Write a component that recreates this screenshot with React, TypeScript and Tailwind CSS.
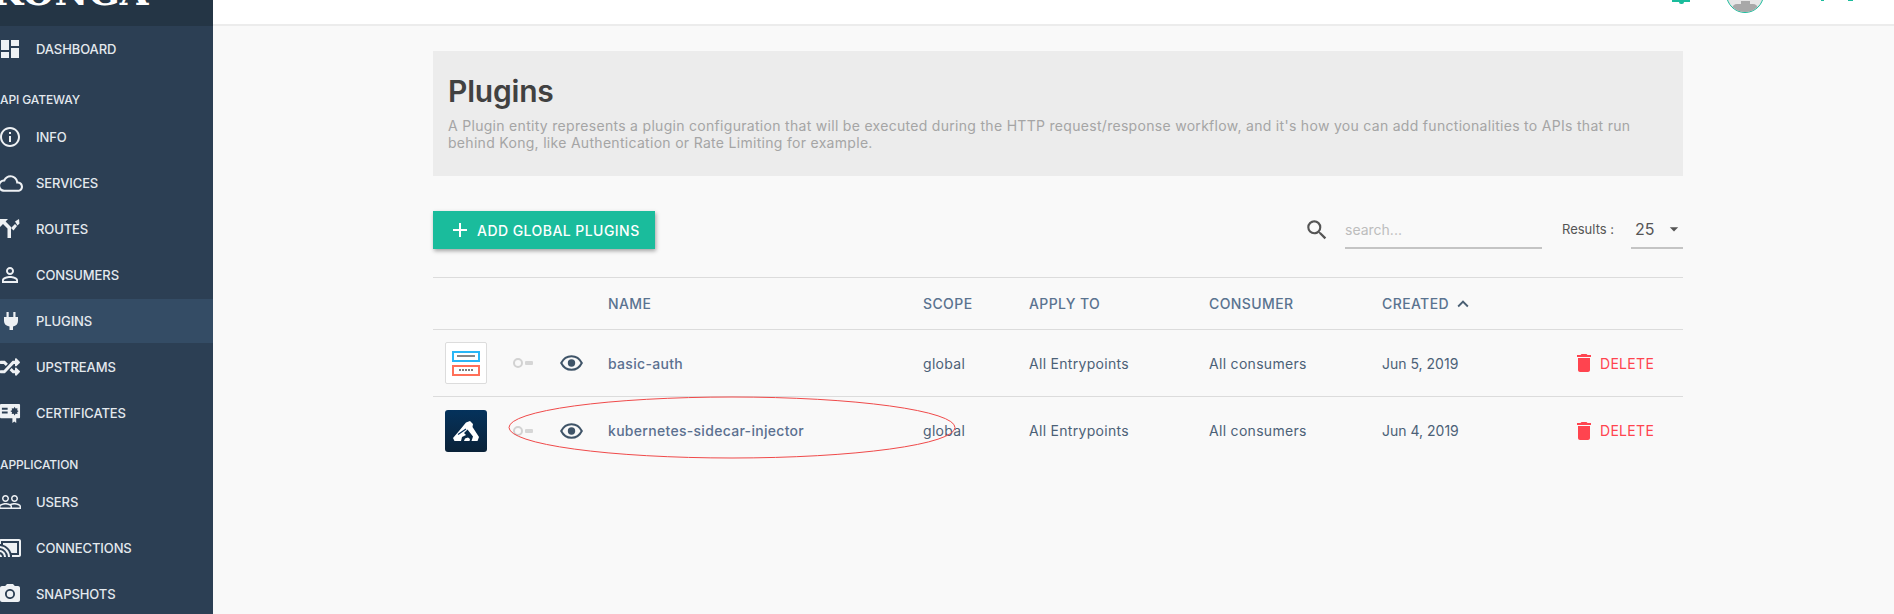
import React from 'react';
import {
  MdDashboard, MdInfoOutline, MdCloudQueue, MdPersonOutline,
  MdPeopleOutline, MdCameraAlt, MdDelete, MdAdd,
  MdKeyboardArrowUp, MdArrowDropDown, MdCastConnected, MdSearch,
} from 'react-icons/md';
import { FaRandom } from 'react-icons/fa';

const RoutesIcon = () => (
  <svg width="20" height="20" viewBox="0 0 20 20" fill="currentColor" className="ml-[2px]">
    <path d="M0 0h8L5.600 2.400 11 8v11H7.500V9.500L3 5 0 8z" />
    <path d="M11 9l4-4 2 2-3.500 4.500z" />
    <path d="M15 2.500L19 0l.5 4.500-2 2z" />
  </svg>
);

const PlugIcon = () => (
  <svg width="14" height="18" viewBox="0 0 14 18" fill="currentColor" className="ml-[6px]">
    <path d="M2.500 0h2.200v5h4.600V0h2.200v5H14v4c0 3-2 5-5 5.500V18H5.500v-3.500C2 14 0 12 0 9V5h2.500z" />
  </svg>
);

const CertIcon = () => (
  <svg width="21" height="21" viewBox="0 0 22 22" fill="currentColor" className="ml-[2px]">
    <path fillRule="evenodd" d="M1 1h19a1 1 0 0 1 1 1v13a1 1 0 0 1-1 1h-3v5l-2-1.500-2 1.500v-5H1a1 1 0 0 1-1-1V2a1 1 0 0 1 1-1zm1 4v2h6V5zm0 4v2h6V9zm13.300-5l-1 1.800-2-.3.300 2-1.800 1 1.800 1.100-.3 2 2-.3 1 1.700 1-1.700 2 .3-.3-2 1.500-1.100-1.500-1 .3-2-2 .3z" />
  </svg>
);

const EyeIcon = () => (
  <svg width="23" height="16" viewBox="0 0 23 16" fill="none" className="text-[#3f5468]">
    <path d="M1.200 8C3.300 3.800 7 1.200 11.500 1.200S19.700 3.800 21.800 8c-2.100 4.200-5.800 6.800-10.300 6.800S3.300 12.200 1.200 8z" stroke="currentColor" strokeWidth="2" />
    <circle cx="11.500" cy="8" r="3.700" fill="currentColor" />
  </svg>
);

const navTop = [{ label: 'DASHBOARD', icon: <MdDashboard size={24} /> }];
const navGateway = [
  { label: 'INFO', icon: <MdInfoOutline size={24} /> },
  { label: 'SERVICES', icon: <MdCloudQueue size={25} /> },
  { label: 'ROUTES', icon: <RoutesIcon /> },
  { label: 'CONSUMERS', icon: <MdPersonOutline size={24} /> },
  { label: 'PLUGINS', icon: <PlugIcon />, active: true },
  { label: 'UPSTREAMS', icon: <FaRandom size={20} className="ml-[2px]" /> },
  { label: 'CERTIFICATES', icon: <CertIcon /> },
];
const navApp = [
  { label: 'USERS', icon: <MdPeopleOutline size={24} /> },
  { label: 'CONNECTIONS', icon: <MdCastConnected size={24} /> },
  { label: 'SNAPSHOTS', icon: <MdCameraAlt size={24} /> },
];

function NavItem({ label, icon, active }: { label: string; icon: React.ReactNode; active?: boolean }) {
  return (
    <div className={`flex shrink-0 items-center ${active ? 'my-[1px] h-[44px] bg-[#344c65]' : 'h-[46px]'}`}>
      <div className="-ml-[2px] mr-[2px] flex w-[36px] shrink-0 items-center justify-start text-[#eef1f4]">{icon}</div>
      <span className="pt-[1px] text-[13px] font-medium tracking-[-0.1px] text-[#e4e9ee]">{label}</span>
    </div>
  );
}

function SectionLabel({ children, h }: { children: React.ReactNode; h: string }) {
  return <div className={`flex shrink-0 items-end pb-[5px] text-[12px] font-medium tracking-[-0.1px] text-[#e4e9ee] ${h}`}>{children}</div>;
}

function Toggle() {
  return (
    <div className="flex items-center gap-[2px]">
      <div className="h-[10px] w-[10px] rounded-full border-2 border-[#d2d2d2]" />
      <div className="h-[4px] w-[8px] rounded-[1px] bg-[#d6d6d6]" />
    </div>
  );
}

function BasicAuthLogo() {
  return (
    <div className="flex h-[42px] w-[42px] flex-col items-center justify-center gap-[3px] rounded-[2px] border border-[#dcdcdc] bg-white">
      <div className="flex h-[11px] w-[28px] items-center justify-center border-2 border-[#29b6f6]">
        <div className="h-[2px] w-[18px] bg-[#888]" />
      </div>
      <div className="flex h-[11px] w-[28px] items-center justify-center gap-[1px] border-2 border-[#ff7059]">
        {[0, 1, 2, 3, 4].map((i) => <div key={i} className="h-[2px] w-[2px] rounded-full bg-[#555]" />)}
      </div>
    </div>
  );
}

function KongLogo() {
  return (
    <div className="flex h-[42px] w-[42px] items-center justify-center rounded-[3px] bg-gradient-to-b from-[#04325c] to-[#0a2238]">
      <svg width="26" height="20" viewBox="0 0 26 20" fill="#fff">
        <path d="M13 1.500L17 0l3 3-.5 3L26 16l-1.500 4h-6l1.500-4.500-5.500-7L11 12l2 2-4 2-1 4H1.500L0 17l6-7z" />
        <path d="M11 20l1-2.500 3-1 2 1.500-.5 2z" />
        <path d="M5 13.500l8-5.500" stroke="#06305a" strokeWidth="1.200" fill="none" />
      </svg>
    </div>
  );
}

const cols = 'grid grid-cols-[175px_315px_106px_180px_173px_194px_1fr]';

const rows = [
  { name: 'basic-auth', date: 'Jun 5, 2019', logo: <BasicAuthLogo /> },
  { name: 'kubernetes-sidecar-injector', date: 'Jun 4, 2019', logo: <KongLogo /> },
];

export default function App() {
  return (
    <div className="flex h-[614px] w-[1894px] overflow-hidden bg-[#f9f9f9] font-[Inter,sans-serif]">
      <aside className="flex w-[213px] shrink-0 flex-col bg-[#2c3f54]">
        <div className="relative flex h-[26px] shrink-0 items-end overflow-hidden bg-[#243545]">
          <span className="-ml-[9px] mb-[24px] font-['DejaVu_Serif',serif] text-[37px] leading-[20px] font-black whitespace-nowrap text-white">KONGA</span>
        </div>
        {navTop.map((n) => <NavItem key={n.label} {...n} />)}
        <SectionLabel h="h-[42px]">API GATEWAY</SectionLabel>
        {navGateway.map((n) => <NavItem key={n.label} {...n} />)}
        <SectionLabel h="h-[43px]">APPLICATION</SectionLabel>
        {navApp.map((n) => <NavItem key={n.label} {...n} />)}
      </aside>

      <main className="flex min-w-0 flex-1 flex-col">
        <header className="flex h-[26px] shrink-0 items-start overflow-hidden border-b-2 border-[#ececec] bg-white">
          <div className="ml-[1459px] flex w-[18px] shrink-0 flex-col items-center">
            <div className="h-[2px] w-[18px] bg-[#1abc9c]" />
            <div className="h-[2px] w-[5px] rounded-b-[3px] bg-[#1abc9c]" />
          </div>
          <div className="ml-[36px] -mt-[25px] flex h-[38px] w-[38px] shrink-0 flex-col items-center justify-end overflow-hidden rounded-full border border-[#1abc9c] bg-[#e6e6e6]">
            <div className="h-[3px] w-[9px] bg-[#a8a8a8]" />
            <div className="h-[8px] w-[26px] rounded-t-[5px] bg-[#a8a8a8]" />
          </div>
          <div className="ml-[57px] h-[1px] w-[3px] shrink-0 bg-[#1abc9c]" />
          <div className="ml-[24px] h-[1px] w-[5px] shrink-0 bg-[#1abc9c]" />
        </header>

        <div className="mx-[220px] w-[1250px] pt-[25px]">
          <section className="flex h-[125px] flex-col bg-[#ececec] px-[15px] pt-[22px]">
            <h1 className="text-[30px] leading-[36px] font-semibold tracking-[-0.2px] text-[#414141]">Plugins</h1>
            <p className="mt-[8px] pr-[30px] text-[14px] leading-[17px] tracking-[0.3px] text-[#a5a5a5]">
              A Plugin entity represents a plugin configuration that will be executed during the HTTP request/response workflow, and it's how you can add functionalities to APIs that run behind Kong, like Authentication or Rate Limiting for example.
            </p>
          </section>

          <div className="mt-[35px] flex h-[38px] items-center">
            <button className="flex h-[38px] w-[222px] items-center bg-[#1abc9c] pl-[18px] text-[14px] font-medium tracking-[0.45px] text-white shadow-[1px_2px_4px_rgba(0,0,0,0.35)]">
              <MdAdd size={24} className="-ml-[3px] mr-[5px]" />
              ADD GLOBAL PLUGINS
            </button>
            <div className="ml-auto flex items-center">
              <MdSearch size={26} className="text-[#555]" />
              <div className="ml-[15px] flex h-[37px] w-[197px] items-center border-b-2 border-[#c4c4c4] text-[14px] text-[#bdbdbd]">search...</div>
              <span className="ml-[20px] w-[69px] text-[13px] text-[#555]">Results :</span>
              <div className="flex h-[38px] w-[52px] items-center justify-between border-b-2 border-[#c4c4c4] pl-[4px] text-[16px] text-[#555]">
                25
                <MdArrowDropDown size={20} className="-mr-[1px] text-[#555]" />
              </div>
            </div>
          </div>

          <div className="relative mt-[28px]">
            <div className={`${cols} h-[53px] items-center border-y border-[#dcdcdc] text-[14px] font-medium tracking-[0.4px] text-[#5a7390]`}>
              <div />
              <div>NAME</div>
              <div>SCOPE</div>
              <div>APPLY TO</div>
              <div>CONSUMER</div>
              <div className="flex items-center">CREATED<MdKeyboardArrowUp size={22} className="ml-[3px] text-[#4a5f73]" /></div>
              <div />
            </div>
            {rows.map((r, i) => (
              <div key={r.name} className={`${cols} h-[67px] items-center text-[14px] tracking-[0.3px] text-[#4c6177] ${i === 0 ? 'border-b border-[#dcdcdc]' : ''}`}>
                <div className="flex items-center pl-[12px]">
                  {r.logo}
                  <div className="ml-[26px]"><Toggle /></div>
                  <div className="ml-[27px]"><EyeIcon /></div>
                </div>
                <div className="font-medium text-[#5b7090]">{r.name}</div>
                <div>global</div>
                <div>All Entrypoints</div>
                <div>All consumers</div>
                <div className="tracking-[0px]">{r.date}</div>
                <div className="flex items-center text-[#ff444f]">
                  <MdDelete size={24} className="-ml-[4px] mr-[4px]" />
                  DELETE
                </div>
              </div>
            ))}
            <svg className="pointer-events-none absolute left-[75px] top-[119px]" width="448" height="63" viewBox="0 0 448 63" fill="none">
              <ellipse cx="224" cy="31.500" rx="223" ry="30.500" stroke="#f04a4a" strokeWidth="1" />
            </svg>
          </div>
        </div>
      </main>
    </div>
  );
}
